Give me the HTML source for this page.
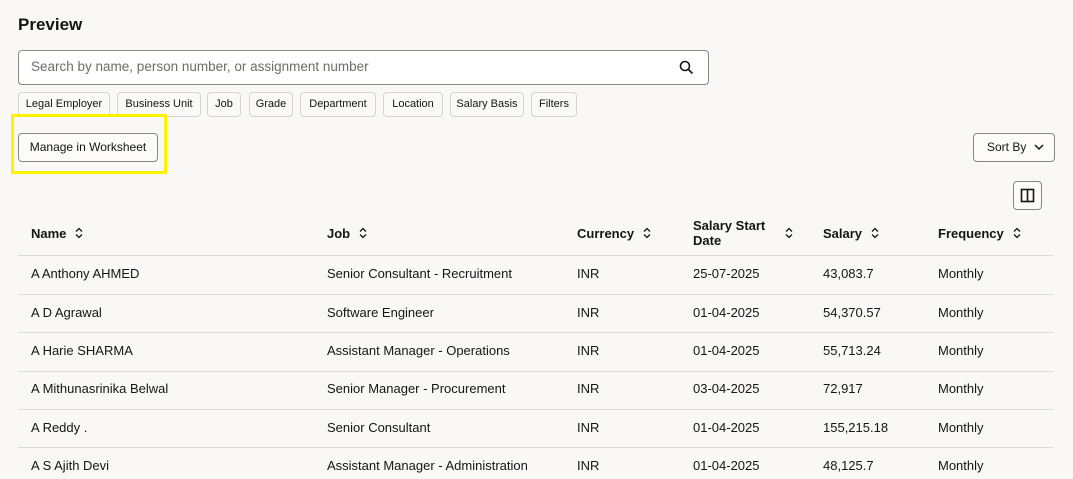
<!DOCTYPE html><html><head><style>
body{margin:0;width:1073px;height:479px;background:#f9f8f6;font-family:"Liberation Sans",sans-serif;color:#161513;position:relative;overflow:hidden}
.a{position:absolute;white-space:nowrap}
.chip{position:absolute;top:92px;height:23px;border:1px solid #d6d3cf;border-radius:4px;font-size:11px;line-height:23px;text-align:center;background:#faf9f7}
.btn{position:absolute;border:1px solid #8a8783;border-radius:4px;background:#fcfbfa;font-size:12px}
.h{position:absolute;font-size:13px;font-weight:bold;top:226px}
.c{position:absolute;font-size:13px}
.line{position:absolute;left:18px;width:1035px;height:1px;background:#dedbd7}
.s{display:inline-block;margin-left:8px;vertical-align:-1px}
</style></head><body>
<svg width="0" height="0" style="position:absolute"><defs><symbol id="sv" viewBox="0 0 10 12"><path d="M2 4.5L5 1.5L8 4.5M2 7.5L5 10.5L8 7.5" fill="none" stroke="#161513" stroke-width="1.3"/></symbol></defs></svg>
<div class="a" style="left:18px;top:15px;font-size:17px;font-weight:bold">Preview</div>
<div class="a" style="left:18px;top:50px;width:689px;height:33px;border:1px solid #8a8783;border-radius:4px;background:#fff"></div>
<div class="a" style="left:31px;top:59px;font-size:13.5px;color:#6f6c68">Search by name, person number, or assignment number</div>
<svg class="a" style="left:679px;top:60px" width="15" height="15" viewBox="0 0 15 15"><circle cx="6" cy="6" r="4.5" fill="none" stroke="#161513" stroke-width="1.6"/><path d="M9.5 9.5L13.5 13.5" stroke="#161513" stroke-width="1.6"/></svg>
<div class="chip" style="left:18px;width:90px">Legal Employer</div>
<div class="chip" style="left:117px;width:82px">Business Unit</div>
<div class="chip" style="left:207px;width:32px">Job</div>
<div class="chip" style="left:249px;width:42px">Grade</div>
<div class="chip" style="left:300px;width:74px">Department</div>
<div class="chip" style="left:383px;width:58px">Location</div>
<div class="chip" style="left:450px;width:72px">Salary Basis</div>
<div class="chip" style="left:531px;width:44px">Filters</div>
<div class="a" style="left:11px;top:114px;height:60px;border:3px solid #fff200;box-sizing:border-box;width:156px"></div>
<div class="btn" style="left:18px;top:133px;width:138px;height:27px;line-height:27px;text-align:center">Manage in Worksheet</div>
<div class="btn" style="left:973px;top:133px;width:80px;height:27px;line-height:27px"><span style="margin-left:13px">Sort By</span><svg style="position:absolute;left:60px;top:10px" width="10" height="7" viewBox="0 0 10 7"><path d="M1 1L5 5L9 1" fill="none" stroke="#161513" stroke-width="1.5"/></svg></div>
<div class="btn" style="left:1013px;top:181px;width:27px;height:27px"><svg style="position:absolute;left:6px;top:6px" width="15" height="15" viewBox="0 0 15 15"><rect x="1.5" y="1.5" width="12" height="12" fill="none" stroke="#161513" stroke-width="1.6"/><path d="M7.5 1.5V13.5" stroke="#161513" stroke-width="1.6"/></svg></div>
<div class="h" style="left:31px">Name<svg class="s" width="10" height="12"><use href="#sv"/></svg></div>
<div class="h" style="left:327px">Job<svg class="s" width="10" height="12"><use href="#sv"/></svg></div>
<div class="h" style="left:577px">Currency<svg class="s" width="10" height="12"><use href="#sv"/></svg></div>
<div class="h" style="left:693px;top:218px;line-height:15px">Salary Start<br>Date</div>
<div class="h" style="left:776px"><svg class="s" width="10" height="12"><use href="#sv"/></svg></div>
<div class="h" style="left:823px">Salary<svg class="s" width="10" height="12"><use href="#sv"/></svg></div>
<div class="h" style="left:938px">Frequency<svg class="s" width="10" height="12"><use href="#sv"/></svg></div>
<div class="line" style="top:255px"></div><div class="line" style="top:294px"></div><div class="line" style="top:332px"></div><div class="line" style="top:371px"></div><div class="line" style="top:409px"></div><div class="line" style="top:447px"></div>
<div class="c" style="left:31px;top:266px">A Anthony AHMED</div><div class="c" style="left:327px;top:266px">Senior Consultant - Recruitment</div><div class="c" style="left:577px;top:266px">INR</div><div class="c" style="left:693px;top:266px">25-07-2025</div><div class="c" style="left:823px;top:266px">43,083.7</div><div class="c" style="left:938px;top:266px">Monthly</div>
<div class="c" style="left:31px;top:305px">A D Agrawal</div><div class="c" style="left:327px;top:305px">Software Engineer</div><div class="c" style="left:577px;top:305px">INR</div><div class="c" style="left:693px;top:305px">01-04-2025</div><div class="c" style="left:823px;top:305px">54,370.57</div><div class="c" style="left:938px;top:305px">Monthly</div>
<div class="c" style="left:31px;top:343px">A Harie SHARMA</div><div class="c" style="left:327px;top:343px">Assistant Manager - Operations</div><div class="c" style="left:577px;top:343px">INR</div><div class="c" style="left:693px;top:343px">01-04-2025</div><div class="c" style="left:823px;top:343px">55,713.24</div><div class="c" style="left:938px;top:343px">Monthly</div>
<div class="c" style="left:31px;top:381px">A Mithunasrinika Belwal</div><div class="c" style="left:327px;top:381px">Senior Manager - Procurement</div><div class="c" style="left:577px;top:381px">INR</div><div class="c" style="left:693px;top:381px">03-04-2025</div><div class="c" style="left:823px;top:381px">72,917</div><div class="c" style="left:938px;top:381px">Monthly</div>
<div class="c" style="left:31px;top:420px">A Reddy .</div><div class="c" style="left:327px;top:420px">Senior Consultant</div><div class="c" style="left:577px;top:420px">INR</div><div class="c" style="left:693px;top:420px">01-04-2025</div><div class="c" style="left:823px;top:420px">155,215.18</div><div class="c" style="left:938px;top:420px">Monthly</div>
<div class="c" style="left:31px;top:458px">A S Ajith Devi</div><div class="c" style="left:327px;top:458px">Assistant Manager - Administration</div><div class="c" style="left:577px;top:458px">INR</div><div class="c" style="left:693px;top:458px">01-04-2025</div><div class="c" style="left:823px;top:458px">48,125.7</div><div class="c" style="left:938px;top:458px">Monthly</div>
</body></html>
